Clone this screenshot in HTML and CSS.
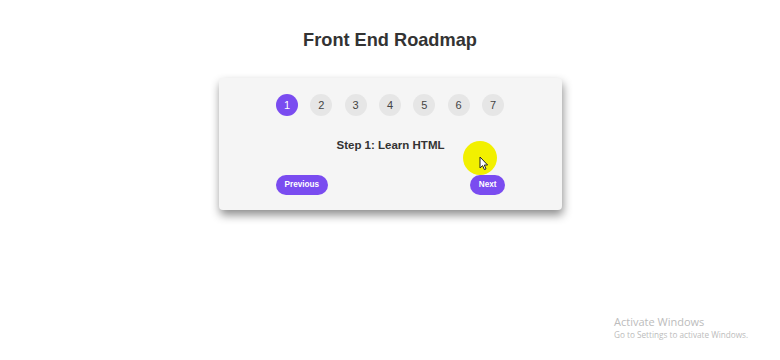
FILE: index.html
```html
<!DOCTYPE html>
<html>
<head>
<meta charset="utf-8">
<link rel="stylesheet" href="styles.css">
</head>
<body>
  <h1 class="title">Front End Roadmap</h1>
  <div class="card">
    <div class="steps">
      <span class="step active">1</span>
      <span class="step">2</span>
      <span class="step">3</span>
      <span class="step">4</span>
      <span class="step">5</span>
      <span class="step">6</span>
      <span class="step">7</span>
    </div>
    <p class="step-text">Step 1: Learn HTML</p>
    <div class="nav">
      <button class="btn">Previous</button>
      <button class="btn">Next</button>
    </div>
  </div>

  <div class="cursor-hl">
    <svg class="cursor" width="10" height="15" viewBox="0 0 10 15">
      <path d="M1 1 L1 12 L3.6 9.6 L5.4 13.6 L7 12.9 L5.3 9 L8.6 9 Z" fill="#fff" stroke="#222" stroke-width="1" stroke-linejoin="round"/>
    </svg>
  </div>

  <div class="watermark">
    <div class="wm-title">Activate Windows</div>
    <div class="wm-sub">Go to Settings to activate Windows.</div>
  </div>
</body>
</html>
```

FILE: styles.css
```css
* { box-sizing: border-box; }

html, body {
  margin: 0;
  padding: 0;
  background: #ffffff;
  font-family: "Liberation Sans", Arial, sans-serif;
  color: #333333;
}

body {
  padding-top: 28px;
  width: 780px;
  height: 360px;
  overflow: hidden;
  position: relative;
}

.title {
  margin: 0;
  font-size: 18.2px;
  line-height: 24px;
  font-weight: bold;
  text-align: center;
  color: #333333;
}

.card {
  width: 343px;
  margin: 26px 0 0 219px;
  padding: 16px 57px 15px 57px;
  background: #f5f5f5;
  border-radius: 4px;
  box-shadow: 1px 5px 10px rgba(0, 0, 0, 0.45);
}

.steps {
  display: flex;
  justify-content: space-between;
  width: 228px;
}

.step {
  width: 22px;
  height: 22px;
  border-radius: 50%;
  background: #e6e6e6;
  color: #444444;
  font-size: 11px;
  line-height: 22px;
  text-align: center;
}

.step.active {
  background: #7a4cf0;
  color: #ffffff;
}

.step-text {
  margin: 21px 0 0 0;
  font-size: 11.5px;
  line-height: 16px;
  font-weight: bold;
  text-align: center;
  color: #333333;
}

.nav {
  display: flex;
  justify-content: space-between;
  margin-top: 22px;
  width: 229px;
}

.btn {
  height: 20px;
  padding: 0 8.5px;
  border: none;
  border-radius: 10px;
  background: #7a4cf0;
  color: #ffffff;
  font-family: "Liberation Sans", Arial, sans-serif;
  font-size: 8.2px;
  font-weight: bold;
  line-height: 20px;
}

.cursor-hl {
  position: absolute;
  left: 463px;
  top: 141px;
  width: 34px;
  height: 34px;
  border-radius: 50%;
  background: #f2f000;
}

.cursor {
  position: absolute;
  left: 16px;
  top: 15px;
}

.watermark {
  position: absolute;
  left: 614px;
  top: 315px;
  color: #bcbcbc;
  font-family: "Open Sans", "Liberation Sans", sans-serif;
}

.wm-title {
  font-size: 11px;
  line-height: 14px;
}

.wm-sub {
  font-size: 8.2px;
  line-height: 12px;
}
```
